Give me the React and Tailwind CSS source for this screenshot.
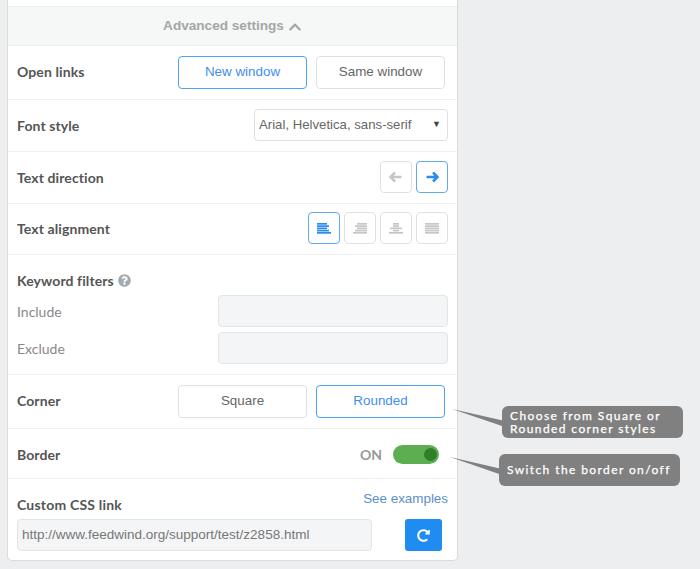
import React from 'react'
import { FaChevronUp, FaQuestionCircle, FaRedoAlt } from 'react-icons/fa'

function AlignIcon({ widths, align, color }) {
  const xs = (w) => (align === 'left' ? 0 : align === 'right' ? 14 - w : (14 - w) / 2)
  return (
    <svg width="14" height="11" viewBox="0 0 14 11" fill={color}>
      {widths.map((w, i) => (
        <rect key={i} x={xs(w)} y={i * 2.25} width={w} height="1.7" />
      ))}
    </svg>
  )
}

function Arrow({ color, flip }) {
  return (
    <svg width="14" height="12" viewBox="0 0 14 12" className={flip ? '-scale-x-100' : ''}>
      <path d="M1.5 6H12.5M8 1.5L12.5 6L8 10.5" fill="none" stroke={color} strokeWidth="2.6" />
    </svg>
  )
}

function SquareBtn({ active, children }) {
  return (
    <button
      type="button"
      className={`flex h-[32px] w-[32px] items-center justify-center rounded-[4px] border bg-white ${active ? 'border-[#62a9f5]' : 'border-[#dfe1e3]'}`}
    >
      {children}
    </button>
  )
}

function WideBtn({ active, children }) {
  return (
    <button
      type="button"
      className={`h-[33px] w-[129px] rounded-[4px] border bg-white pt-[1px] text-[13.4px] ${active ? 'border-[#4ea1f3] text-[#3f8ef0]' : 'border-[#dfe1e3] text-[#666]'}`}
    >
      {children}
    </button>
  )
}

function Label({ children }) {
  return <span className="font-['Lato',sans-serif] text-[14px] font-bold tracking-[0.1px] text-[#555]">{children}</span>
}

function Callout({ className, children, tailPoints }) {
  return (
    <>
      <svg className="absolute top-0 left-0" width="700" height="569" fill="#808080">
        <polygon points={tailPoints} />
      </svg>
      <div className={`absolute rounded-[6px] bg-[#808080] px-[8px] font-['Lato',sans-serif] text-[12px] tracking-[1.4px] whitespace-nowrap text-white [-webkit-text-stroke:0.25px_#fff] ${className}`}>
        {children}
      </div>
    </>
  )
}

export default function App() {
  return (
    <div className="relative h-[569px] w-[700px] overflow-hidden bg-[#eceef0] font-['Liberation_Sans',sans-serif]">
      <div className="ml-[7px] h-[561px] w-[451px] rounded-b-[5px] border-x border-b border-[#d9dbdd] bg-white">
        <div className="h-[6px]" />
        <div className="flex h-[40px] items-center justify-center gap-[4px] border-y border-[#eceeee] bg-[#f6f7f7] pt-[1px] text-[13.6px] font-bold text-[#a4a6a6]">
          Advanced settings <FaChevronUp className="text-[14px]" />
        </div>

        <div className="flex h-[54px] items-center justify-between border-b border-[#f0f1f1] pr-[12px] pl-[9px] pb-[1px]">
          <span className="-mt-[1px]"><Label>Open links</Label></span>
          <div className="flex gap-[9px]">
            <WideBtn active>New window</WideBtn>
            <WideBtn>Same window</WideBtn>
          </div>
        </div>

        <div className="flex h-[52px] items-center justify-between border-b border-[#f0f1f1] px-[9px] pb-[1px]">
          <span className="mt-[1px]"><Label>Font style</Label></span>
          <div className="flex h-[32px] w-[194px] items-center justify-between rounded-[4px] border border-[#dfe1e3] pr-[6px] pl-[4px] text-[13.2px] text-[#666]">
            <span>Arial, Helvetica, sans-serif</span>
            <span className="text-[9px] text-[#444]">▼</span>
          </div>
        </div>

        <div className="flex h-[52px] items-center justify-between border-b border-[#f0f1f1] px-[9px] pb-[1px]">
          <Label>Text direction</Label>
          <div className="flex gap-[4px]">
            <SquareBtn><Arrow flip color="#c4c6c8" /></SquareBtn>
            <SquareBtn active><Arrow color="#2a8cf2" /></SquareBtn>
          </div>
        </div>

        <div className="flex h-[51px] items-center justify-between border-b border-[#f0f1f1] px-[9px] pb-[2px]">
          <span className="mt-[1px]"><Label>Text alignment</Label></span>
          <div className="flex gap-[4px]">
            <SquareBtn active><AlignIcon align="left" widths={[10, 12, 10, 12, 14]} color="#2a8cf2" /></SquareBtn>
            <SquareBtn><AlignIcon align="right" widths={[10, 12, 10, 12, 14]} color="#c4c6c8" /></SquareBtn>
            <SquareBtn><AlignIcon align="center" widths={[6, 6, 12, 6, 14]} color="#c4c6c8" /></SquareBtn>
            <SquareBtn><AlignIcon align="left" widths={[14, 14, 14, 14, 14]} color="#c4c6c8" /></SquareBtn>
          </div>
        </div>

        <div className="h-[120px] border-b border-[#f0f1f1] px-[9px] pt-[15px]">
          <div className="flex h-[20px] items-center gap-[4px]">
            <Label>Keyword filters</Label>
            <FaQuestionCircle className="text-[13px] text-[#a3acb3]" />
          </div>
          <div className="mt-[5px] flex items-center justify-between">
            <span className="font-['Lato',sans-serif] text-[14px] text-[#888]">Include</span>
            <div className="h-[32px] w-[230px] rounded-[4px] border border-[#e2e4e6] bg-[#f4f5f6]" />
          </div>
          <div className="mt-[5px] flex items-center justify-between">
            <span className="font-['Lato',sans-serif] text-[14px] text-[#888]">Exclude</span>
            <div className="h-[32px] w-[230px] rounded-[4px] border border-[#e2e4e6] bg-[#f4f5f6]" />
          </div>
        </div>

        <div className="flex h-[54px] items-center justify-between border-b border-[#f0f1f1] pr-[12px] pl-[9px] pb-[1px]">
          <span className="-mt-[1px]"><Label>Corner</Label></span>
          <div className="flex gap-[9px]">
            <WideBtn>Square</WideBtn>
            <WideBtn active>Rounded</WideBtn>
          </div>
        </div>

        <div className="flex h-[50px] items-center justify-between border-b border-[#f0f1f1] pt-[1px] pr-[18px] pl-[9px]">
          <Label>Border</Label>
          <div className="flex items-center gap-[11px]">
            <span className="font-['Lato',sans-serif] text-[14px] font-bold text-[#999]">ON</span>
            <div className="flex h-[19px] w-[46px] items-center justify-end rounded-full bg-[#5cae50] pr-[2px]">
              <div className="h-[13px] w-[13px] rounded-full bg-[#2f7f28]" />
            </div>
          </div>
        </div>

        <div className="px-[9px] pt-[10px]">
          <div className="flex items-start justify-between">
            <span className="mt-[5px] font-['Lato',sans-serif] text-[14px] font-bold tracking-[0.2px] text-[#555]">Custom CSS link</span>
            <a className="text-[13.4px] text-[#5b8fc9]">See examples</a>
          </div>
          <div className="mt-[4px] flex items-center justify-between pr-[6px]">
            <div className="flex h-[32px] w-[355px] items-center rounded-[4px] border border-[#e2e4e6] bg-[#f4f5f6] px-[4px] text-[13.5px] text-[#777]">
              http://www.feedwind.org/support/test/z2858.html
            </div>
            <button type="button" className="flex h-[32px] w-[37px] items-center justify-center rounded-[3px] bg-[#1e8cf0]">
              <FaRedoAlt className="text-[13px] text-white" />
            </button>
          </div>
        </div>
      </div>

      <Callout
        className="top-[406px] left-[502px] h-[32px] w-[181px] leading-[13px]"
        tailPoints="452,409 505,421 505,427"
      >
        <div className="pt-[3px]">Choose from Square or</div>
        <div>Rounded corner styles</div>
      </Callout>
      <Callout
        className="top-[454px] left-[499px] flex h-[32px] w-[181px] items-center"
        tailPoints="450,457 502,469 502,475"
      >
        Switch the border on/off
      </Callout>
    </div>
  )
}
